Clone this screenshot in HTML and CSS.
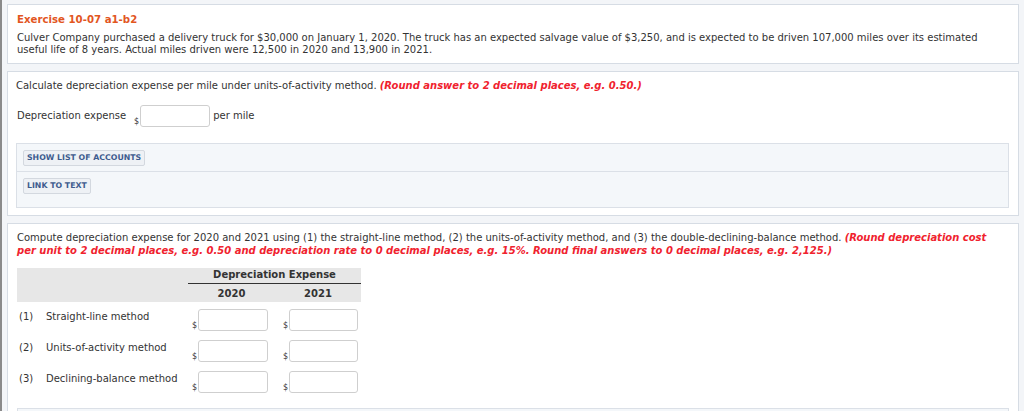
FILE: index.html
```html
<!DOCTYPE html>
<html lang="en">
<head>
    <meta charset="UTF-8">
    <title>Exercise 10-07 a1-b2</title>
    <link rel="stylesheet" href="styles.css">
</head>
<body>
    <div class="page">
        <div class="panel intro">
            <h1 class="title">Exercise 10-07 a1-b2</h1>
            <p>Culver Company purchased a delivery truck for $30,000 on January 1, 2020. The truck has an expected salvage value of $3,250, and is expected to be driven 107,000 miles over its estimated useful life of 8 years. Actual miles driven were 12,500 in 2020 and 13,900 in 2021.</p>
        </div>

        <div class="panel part-a">
            <p>Calculate depreciation expense per mile under units-of-activity method. <span class="hint">(Round answer to 2 decimal places, e.g. 0.50.)</span></p>
            <div class="answer-row">
                <span class="label">Depreciation expense</span>
                <span class="dollar">$</span>
                <input type="text" class="field">
                <span class="unit">per mile</span>
            </div>
            <div class="tools">
                <div class="tool-row"><button class="tool-btn">SHOW LIST OF ACCOUNTS</button></div>
                <div class="tool-row"><button class="tool-btn">LINK TO TEXT</button></div>
            </div>
        </div>

        <div class="panel part-b">
            <p class="question">Compute depreciation expense for 2020 and 2021 using (1) the straight-line method, (2) the units-of-activity method, and (3) the double-declining-balance method. <span class="hint">(Round depreciation cost per unit to 2 decimal places, e.g. 0.50 and depreciation rate to 0 decimal places, e.g. 15%. Round final answers to 0 decimal places, e.g. 2,125.)</span></p>
            <table class="dep-table">
                <thead>
                    <tr>
                        <th class="blank"></th>
                        <th class="group" colspan="2"><span>Depreciation Expense</span></th>
                    </tr>
                    <tr>
                        <th class="blank"></th>
                        <th class="year first">2020</th>
                        <th class="year">2021</th>
                    </tr>
                </thead>
                <tbody>
                    <tr>
                        <td class="method"><span class="num">(1)</span>Straight-line method</td>
                        <td class="first"><span class="dollar">$</span><input type="text" class="field"></td>
                        <td class="second"><span class="dollar">$</span><input type="text" class="field"></td>
                    </tr>
                    <tr>
                        <td class="method"><span class="num">(2)</span>Units-of-activity method</td>
                        <td class="first"><span class="dollar">$</span><input type="text" class="field"></td>
                        <td class="second"><span class="dollar">$</span><input type="text" class="field"></td>
                    </tr>
                    <tr>
                        <td class="method"><span class="num">(3)</span>Declining-balance method</td>
                        <td class="first"><span class="dollar">$</span><input type="text" class="field"></td>
                        <td class="second"><span class="dollar">$</span><input type="text" class="field"></td>
                    </tr>
                </tbody>
            </table>
            <div class="tools tail"></div>
        </div>
    </div>
</body>
</html>
```

FILE: styles.css
```css
* {
    margin: 0;
    padding: 0;
    box-sizing: border-box;
    font-family: 'DejaVu Sans', Verdana, sans-serif;
}

body {
    background-color: #f3f5f8;
    border-left: 2px solid #8a8a8a;
    min-height: 100vh;
    color: #333;
    font-size: 10px;
    line-height: 12px;
}

.page {
    padding: 4px 5px 0 5px;
}

.panel {
    background: white;
    border: 1px solid #d6dce4;
    padding: 8px 9px 7px 8px;
    margin-bottom: 7px;
}

.intro {
    padding-top: 8px;
    padding-bottom: 7px;
    padding-left: 9px;
}

.part-b {
    padding-top: 7px;
    padding-left: 9px;
}

.title {
    font-size: 10.2px;
    font-weight: bold;
    color: #e2561f;
    line-height: 14px;
    margin-bottom: 5px;
}

.question {
    line-height: 13px;
    padding-right: 8px;
}

.hint {
    color: #f0222e;
    font-weight: bold;
    font-style: italic;
}

.answer-row {
    display: flex;
    align-items: center;
    margin-top: 13px;
    padding-left: 1px;
}

.label {
    margin-right: 8px;
    margin-top: -1px;
}

.dollar {
    font-size: 8px;
    align-self: flex-end;
    margin-right: 1px;
    line-height: 10px;
}

.field {
    width: 70px;
    height: 22px;
    border: 1px solid #cfcfcf;
    border-radius: 3px;
    background: white;
}

.unit {
    margin-left: 3px;
    margin-top: -1px;
}

.tools {
    margin-top: 16px;
    background: #f4f7fa;
    border: 1px solid #dbe0e7;
}

.tool-row {
    padding: 6px;
    height: 28px;
    border-bottom: 1px solid #dbe0e7;
}

.tool-row:last-child {
    border-bottom: none;
    height: 35px;
}

.tool-btn {
    font-family: 'DejaVu Sans', Verdana, sans-serif;
    font-size: 7.8px;
    font-weight: bold;
    color: #3d5b8e;
    background: #eef1f5;
    border: 1px solid #d3d8df;
    border-radius: 2px;
    padding: 2px 3px;
    line-height: 10px;
}

.dep-table {
    border-collapse: collapse;
    margin-top: 11px;
}

.dep-table th {
    background: #e7e7e7;
    font-weight: bold;
    text-align: center;
    height: 17px;
    padding: 0;
}

.dep-table th.blank {
    width: 171px;
}

.dep-table th.group span {
    display: block;
    border-bottom: 1px solid #333;
    padding-bottom: 2px;
}

.dep-table th.year {
    width: 86px;
}

.dep-table th.year.first {
    width: 87px;
}

.dep-table td {
    padding: 7px 0 2px 0;
    height: 31px;
    vertical-align: top;
}

.dep-table td.method {
    padding: 0 0 2px 2px;
    vertical-align: middle;
}

.num {
    display: inline-block;
    width: 27px;
}

.dep-table td .dollar {
    display: inline-block;
    vertical-align: bottom;
    margin-left: 4px;
}

.dep-table td.second .dollar {
    margin-left: 8px;
}

.dep-table td .field {
    vertical-align: bottom;
}

.dep-table td.second .field {
    width: 69px;
}

.tail {
    height: 30px;
    margin-top: 13px;
}
```
